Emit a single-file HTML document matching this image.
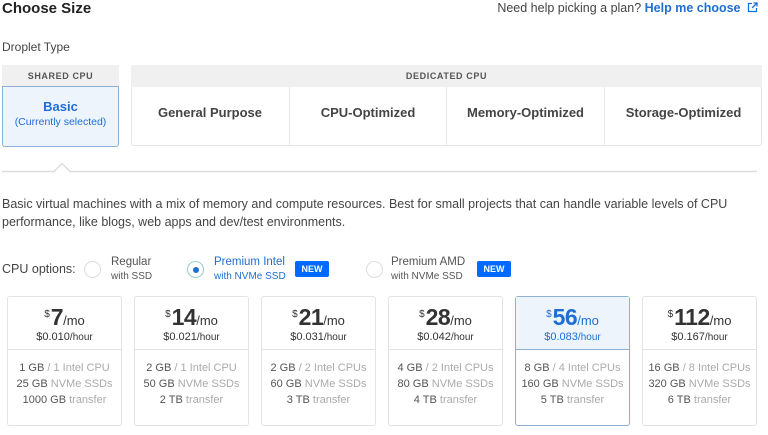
<!DOCTYPE html>
<html><head><meta charset="utf-8"><style>
*{box-sizing:border-box;margin:0;padding:0}
body{width:768px;height:435px;background:#fff;font-family:"Liberation Sans",sans-serif;color:#333;position:relative;overflow:hidden}
.a{position:absolute;white-space:nowrap}
.card{position:absolute;top:296px;width:115px;height:130px;border:1px solid #e3e3e3;border-radius:3px;text-align:center}
.card .top{height:53px;border-bottom:1px solid #e3e3e3;padding-top:8px}
.p{font-size:13px;color:#333;line-height:19px}
.p b{font-size:23px;font-weight:bold;letter-spacing:-0.5px}
.p sup{font-size:10px;vertical-align:8px;margin-right:1px}
.hr{font-size:11px;color:#333;line-height:14px}
.hr span{font-size:10px}
.sp{padding-top:10px;font-size:11px;line-height:16px;color:#555}
.sp span{color:#aaa}
.sel{border-color:#8fb0d6;background:#fff}
.sel .top{background:#eef4fc;border-bottom-color:#8fb0d6}
.sel .p,.sel .hr{color:#1f6ed4}
.rad{position:absolute;width:17px;height:17px;border:1px solid #ddd;border-radius:50%}
.new{position:absolute;background:#0069ff;color:#fff;font-size:9px;font-weight:bold;width:34px;height:16px;line-height:16px;text-align:center;border-radius:2px}
.cell{position:absolute;top:87px;height:58px;line-height:52px;text-align:center;font-size:13px;font-weight:bold;color:#444;border-left:1px solid #e8e8e8}
</style></head><body>
<div class="a" style="left:2px;top:0;font-size:15px;font-weight:bold;color:#222">Choose Size</div>
<div class="a" style="right:10px;top:1px;font-size:12.5px;color:#444">Need help picking a plan? <span style="color:#1f6ed4;font-weight:bold">Help me choose</span>
<svg width="11" height="11" viewBox="0 0 11 11" style="vertical-align:-1px;margin-left:3px"><path d="M5 1.5H1.5v8h8V6M6.5 1H10v3.5M10 1L5 6" fill="none" stroke="#1f6ed4" stroke-width="1.3"/></svg></div>
<div class="a" style="left:2px;top:40px;font-size:12px;color:#444">Droplet Type</div>
<div class="a" style="left:2px;top:65px;width:117px;height:22px;background:#f0f0f0;font-size:9px;font-weight:bold;letter-spacing:.6px;color:#555;text-align:center;line-height:22px">SHARED CPU</div>
<div class="a" style="left:2px;top:86px;width:117px;height:61px;background:#eef4fc;border:1px solid #8fb0d6;border-radius:0 0 3px 3px;text-align:center;color:#1f6ed4">
<div style="font-size:13px;font-weight:bold;margin-top:12px">Basic</div><div style="font-size:10.5px;margin-top:2px">(Currently selected)</div></div>
<div class="a" style="left:131px;top:65px;width:631px;height:81px;border:1px solid #e6e6e6;border-radius:3px"></div>
<div class="a" style="left:131px;top:65px;width:631px;height:22px;background:#f0f0f0;font-size:9px;font-weight:bold;letter-spacing:.6px;color:#555;text-align:center;line-height:22px">DEDICATED CPU</div>
<div class="cell" style="left:131px;width:158px;border-left:none">General Purpose</div>
<div class="cell" style="left:289px;width:157px">CPU-Optimized</div>
<div class="cell" style="left:446px;width:158px">Memory-Optimized</div>
<div class="cell" style="left:604px;width:158px">Storage-Optimized</div>
<svg class="a" style="left:0;top:160px" width="768" height="14"><path d="M2 11.5H54L62 3.5L70 11.5H757" fill="none" stroke="#ddd" stroke-width="1.5"/></svg>
<div class="a" style="left:2px;top:196px;font-size:12.5px;line-height:17.5px;color:#444;white-space:normal;width:740px">Basic virtual machines with a mix of memory and compute resources. Best for small projects that can handle variable levels of CPU performance, like blogs, web apps and dev/test environments.</div>
<div class="a" style="left:2px;top:262px;font-size:12.5px;color:#444">CPU options:</div>
<div class="rad" style="left:84px;top:261px"></div>
<div class="a" style="left:111px;top:255px;font-size:11.5px;color:#555;line-height:14px">Regular<br><span style="font-size:10px">with SSD</span></div>
<div class="rad" style="left:187px;top:261px;border-color:#9cc"></div>
<div class="a" style="left:193px;top:267px;width:6px;height:6px;border-radius:50%;background:#1f6ed4"></div>
<div class="a" style="left:214px;top:255px;font-size:11.5px;color:#1f6ed4;line-height:14px">Premium Intel<br><span style="font-size:10px">with NVMe SSD</span></div>
<div class="new" style="left:295px;top:261px">NEW</div>
<div class="rad" style="left:366px;top:261px"></div>
<div class="a" style="left:391px;top:255px;font-size:11.5px;color:#555;line-height:14px">Premium AMD<br><span style="font-size:10px">with NVMe SSD</span></div>
<div class="new" style="left:477px;top:261px">NEW</div>

<div class="card" style="left:7px"><div class="top"><div class="p"><sup>$</sup><b>7</b>/mo</div><div class="hr">$0.010<span>/hour</span></div></div><div class="sp">1 GB <span>/ 1 Intel CPU</span><br>25 GB <span>NVMe SSDs</span><br>1000 GB <span>transfer</span></div></div>
<div class="card" style="left:134px"><div class="top"><div class="p"><sup>$</sup><b>14</b>/mo</div><div class="hr">$0.021<span>/hour</span></div></div><div class="sp">2 GB <span>/ 1 Intel CPU</span><br>50 GB <span>NVMe SSDs</span><br>2 TB <span>transfer</span></div></div>
<div class="card" style="left:261px"><div class="top"><div class="p"><sup>$</sup><b>21</b>/mo</div><div class="hr">$0.031<span>/hour</span></div></div><div class="sp">2 GB <span>/ 2 Intel CPUs</span><br>60 GB <span>NVMe SSDs</span><br>3 TB <span>transfer</span></div></div>
<div class="card" style="left:388px"><div class="top"><div class="p"><sup>$</sup><b>28</b>/mo</div><div class="hr">$0.042<span>/hour</span></div></div><div class="sp">4 GB <span>/ 2 Intel CPUs</span><br>80 GB <span>NVMe SSDs</span><br>4 TB <span>transfer</span></div></div>
<div class="card sel" style="left:515px"><div class="top"><div class="p"><sup>$</sup><b>56</b>/mo</div><div class="hr">$0.083<span>/hour</span></div></div><div class="sp">8 GB <span>/ 4 Intel CPUs</span><br>160 GB <span>NVMe SSDs</span><br>5 TB <span>transfer</span></div></div>
<div class="card" style="left:642px"><div class="top"><div class="p"><sup>$</sup><b>112</b>/mo</div><div class="hr">$0.167<span>/hour</span></div></div><div class="sp">16 GB <span>/ 8 Intel CPUs</span><br>320 GB <span>NVMe SSDs</span><br>6 TB <span>transfer</span></div></div>
</body></html>
